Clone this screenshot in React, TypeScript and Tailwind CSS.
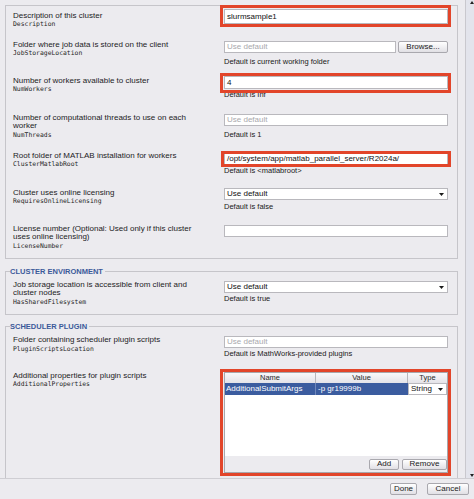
import type { ReactNode } from "react";

const SANS = "font-['Liberation_Sans',Arial,sans-serif]";

function Caret() {
  return (
    <svg width="5" height="3" viewBox="0 0 5 3" className="shrink-0">
      <path d="M0 0h5L2.5 3z" fill="#1a1a1a" />
    </svg>
  );
}

function Field({
  value,
  placeholder,
  className = "h-[12px]",
}: {
  value?: string;
  placeholder?: string;
  className?: string;
}) {
  return (
    <div
      className={`flex items-center border border-[#b9b8bd] bg-white px-[2px] text-[8px] leading-none whitespace-nowrap ${className}`}
    >
      {value ? (
        <span className="text-[#111]">{value}</span>
      ) : (
        <span className="text-[#a9a8ad]">{placeholder}</span>
      )}
    </div>
  );
}

function Select({ value }: { value: string }) {
  return (
    <div className="flex h-[12px] items-center justify-between border border-[#b9b8bd] bg-white pl-[2px] pr-[3px] text-[8px] leading-none text-[#111]">
      <span>{value}</span>
      <Caret />
    </div>
  );
}

function Hint({ children, className = "" }: { children: ReactNode; className?: string }) {
  return (
    <p className={`text-[7.5px] leading-[9px] whitespace-nowrap text-[#202020] ${className}`}>
      {children}
    </p>
  );
}

function Btn({ children, className = "" }: { children: ReactNode; className?: string }) {
  return (
    <button
      type="button"
      className={`flex shrink-0 items-center justify-center rounded-[2px] border border-[#a9a8ae] bg-linear-to-b from-white to-[#e1e0e5] text-[8px] leading-none text-[#1a1a1a] ${className}`}
    >
      {children}
    </button>
  );
}

// red annotation frame drawn over a control
function Marked({ ring, children }: { ring: string; children: ReactNode }) {
  return (
    <div className="relative">
      {children}
      <div className={`pointer-events-none absolute z-10 border-[3px] border-[#e2452a] ${ring}`} />
    </div>
  );
}

function Row({
  label,
  prop,
  rowClass,
  labelClass,
  ctrlClass,
  children,
}: {
  label: string[];
  prop: string;
  rowClass: string;
  labelClass: string;
  ctrlClass: string;
  children: ReactNode;
}) {
  return (
    <div className={`flex ${rowClass}`}>
      <div className={`w-[218px] shrink-0 pl-[7px] ${labelClass}`}>
        {label.map((line) => (
          <p key={line} className="text-[8px] leading-[8.5px] whitespace-nowrap text-[#1c1c1e]">
            {line}
          </p>
        ))}
        <p className="font-['DejaVu_Sans_Mono',monospace] text-[6.4px] leading-[8.5px] text-[#262626]">
          {prop}
        </p>
      </div>
      <div className={`w-[224px] shrink-0 ${ctrlClass}`}>{children}</div>
    </div>
  );
}

function PropsTable() {
  return (
    <div className="flex h-[101px] flex-col border border-[#a8a7ac] bg-white">
      <div className="flex h-[10px] shrink-0 bg-linear-to-b from-[#f8f8fa] to-[#e4e3e8] text-[7.5px] leading-[10px] text-[#2a2a2a]">
        <div className="w-[91px] border-r border-[#b7b6bb] text-center">Name</div>
        <div className="w-[92px] border-r border-[#b7b6bb] text-center">Value</div>
        <div className="flex-1 text-center">Type</div>
      </div>
      <div className="flex h-[12px] shrink-0 text-[8px] leading-[12px]">
        <div className="w-[91px] border-r border-[#7088bb] bg-[#3b5c9f] pl-[1px] whitespace-nowrap text-white">
          AdditionalSubmitArgs
        </div>
        <div className="w-[92px] bg-[#3b5c9f] pl-[2px] text-white">-p gr19999b</div>
        <div className="flex flex-1 items-center justify-between border border-[#b9b8bd] bg-white pl-[2px] pr-[3px] text-[#111]">
          <span>String</span>
          <Caret />
        </div>
      </div>
      <div className="flex-1" />
      <div className="flex h-[16px] shrink-0 items-center justify-end gap-[3px] bg-[#ecebef]">
        <Btn className="h-[11px] w-[30px]">Add</Btn>
        <Btn className="h-[11px] w-[45px]">Remove</Btn>
      </div>
    </div>
  );
}

export default function App() {
  return (
    <div className={`flex h-[499px] w-[474px] flex-col overflow-hidden bg-[#ecebef] ${SANS}`}>
      <div className="flex h-[479px] shrink-0 border-b border-[#cfced3]">
        <div className="w-[465px] shrink-0 overflow-hidden">
          <section className="ml-[5px] mt-[5px] w-[453px] border border-[#c6c5ca]">
            <Row
              label={["Description of this cluster"]}
              prop="Description"
              rowClass="h-[31px]"
              labelClass="pt-[5.75px]"
              ctrlClass="pt-[3px]"
            >
              <Marked ring="-top-[4px] -bottom-[3px] -left-[4px] -right-[3px]">
                <Field value="slurmsample1" className="h-[15px]" />
              </Marked>
            </Row>
            <Row
              label={["Folder where job data is stored on the client"]}
              prop="JobStorageLocation"
              rowClass="h-[35px]"
              labelClass="pt-[3.75px]"
              ctrlClass="pt-[4px]"
            >
              <div className="flex gap-[2px]">
                <Field placeholder="Use default" className="h-[12px] w-[172px]" />
                <Btn className="h-[12px] w-[50px]">Browse...</Btn>
              </div>
              <Hint className="mt-[3.5px]">Default is current working folder</Hint>
            </Row>
            <Row
              label={["Number of workers available to cluster"]}
              prop="NumWorkers"
              rowClass="h-[36px]"
              labelClass="pt-[4.75px]"
              ctrlClass="pt-[4px]"
            >
              <Marked ring="-top-[3px] -bottom-[4px] -left-[4px] -right-[3px]">
                <Field value="4" className="h-[13px]" />
              </Marked>
              <Hint className="mt-[0.5px]">Default is Inf</Hint>
            </Row>
            <Row
              label={["Number of computational threads to use on each", "worker"]}
              prop="NumThreads"
              rowClass="h-[37px]"
              labelClass="pt-[5.5px]"
              ctrlClass="pt-[6px]"
            >
              <Field placeholder="Use default" />
              <Hint className="mt-[3.5px]">Default is 1</Hint>
            </Row>
            <Row
              label={["Root folder of MATLAB installation for workers"]}
              prop="ClusterMatlabRoot"
              rowClass="h-[38px]"
              labelClass="pt-[6.75px]"
              ctrlClass="pt-[7px]"
            >
              <Marked ring="-top-[1px] -bottom-[2px] -left-[3px] -right-[3px]">
                <Field value="/opt/system/app/matlab_parallel_server/R2024a/" className="h-[13px]" />
              </Marked>
              <Hint className="mt-[0.5px]">Default is &lt;matlabroot&gt;</Hint>
            </Row>
            <Row
              label={["Cluster uses online licensing"]}
              prop="RequiresOnlineLicensing"
              rowClass="h-[35px]"
              labelClass="pt-[5.5px]"
              ctrlClass="pt-[5px]"
            >
              <Select value="Use default" />
              <Hint className="mt-[1.8px]">Default is false</Hint>
            </Row>
            <Row
              label={["License number (Optional: Used only if this cluster", "uses online licensing)"]}
              prop="LicenseNumber"
              rowClass="h-[40px]"
              labelClass="pt-[6.75px]"
              ctrlClass="pt-[7px]"
            >
              <Field />
            </Row>
          </section>

          <fieldset className="ml-[5px] mt-[7.5px] w-[453px] border border-[#c6c5ca]">
            <legend className="ml-[4px] pr-[2px] text-[7.5px] leading-[9px] font-bold text-[#3b5a9a]">
              CLUSTER ENVIRONMENT
            </legend>
            <Row
              label={["Job storage location is accessible from client and", "cluster nodes"]}
              prop="HasSharedFilesystem"
              rowClass="h-[38.5px]"
              labelClass="pt-[5.25px]"
              ctrlClass="pt-[5.5px]"
            >
              <Select value="Use default" />
              <Hint className="mt-[1px]">Default is true</Hint>
            </Row>
          </fieldset>

          <fieldset className="ml-[5px] mt-[6.7px] w-[453px] border border-[#c6c5ca] pb-[20px]">
            <legend className="ml-[4px] pr-[2px] text-[7.5px] leading-[9px] font-bold text-[#3b5a9a]">
              SCHEDULER PLUGIN
            </legend>
            <Row
              label={["Folder containing scheduler plugin scripts"]}
              prop="PluginScriptsLocation"
              rowClass="h-[36.8px]"
              labelClass="pt-[5.5px]"
              ctrlClass="pt-[5.5px]"
            >
              <Field placeholder="Use default" />
              <Hint className="mt-[1px]">Default is MathWorks-provided plugins</Hint>
            </Row>
            <Row
              label={["Additional properties for plugin scripts"]}
              prop="AdditionalProperties"
              rowClass="h-[110px]"
              labelClass="pt-[4.5px]"
              ctrlClass="pt-[5px]"
            >
              <Marked ring="-top-[3px] -bottom-[3px] -left-[4px] -right-[3px]">
                <PropsTable />
              </Marked>
            </Row>
          </fieldset>
        </div>

        <div className="flex w-[9px] shrink-0 flex-col justify-between border-l border-[#c9c8ce] bg-[#e3e4ec] pb-[1px] pl-[4px] pt-[1px]">
          <svg width="4" height="3" viewBox="0 0 4 3">
            <path d="M0 3h4L2 0z" fill="#222" />
          </svg>
          <svg width="4" height="3" viewBox="0 0 4 3">
            <path d="M0 0h4L2 3z" fill="#222" />
          </svg>
        </div>
      </div>

      <div className="flex flex-1 items-center justify-end gap-[10px] pr-[5px]">
        <Btn className="h-[12px] w-[27px]">Done</Btn>
        <Btn className="h-[12px] w-[42px]">Cancel</Btn>
      </div>
    </div>
  );
}
